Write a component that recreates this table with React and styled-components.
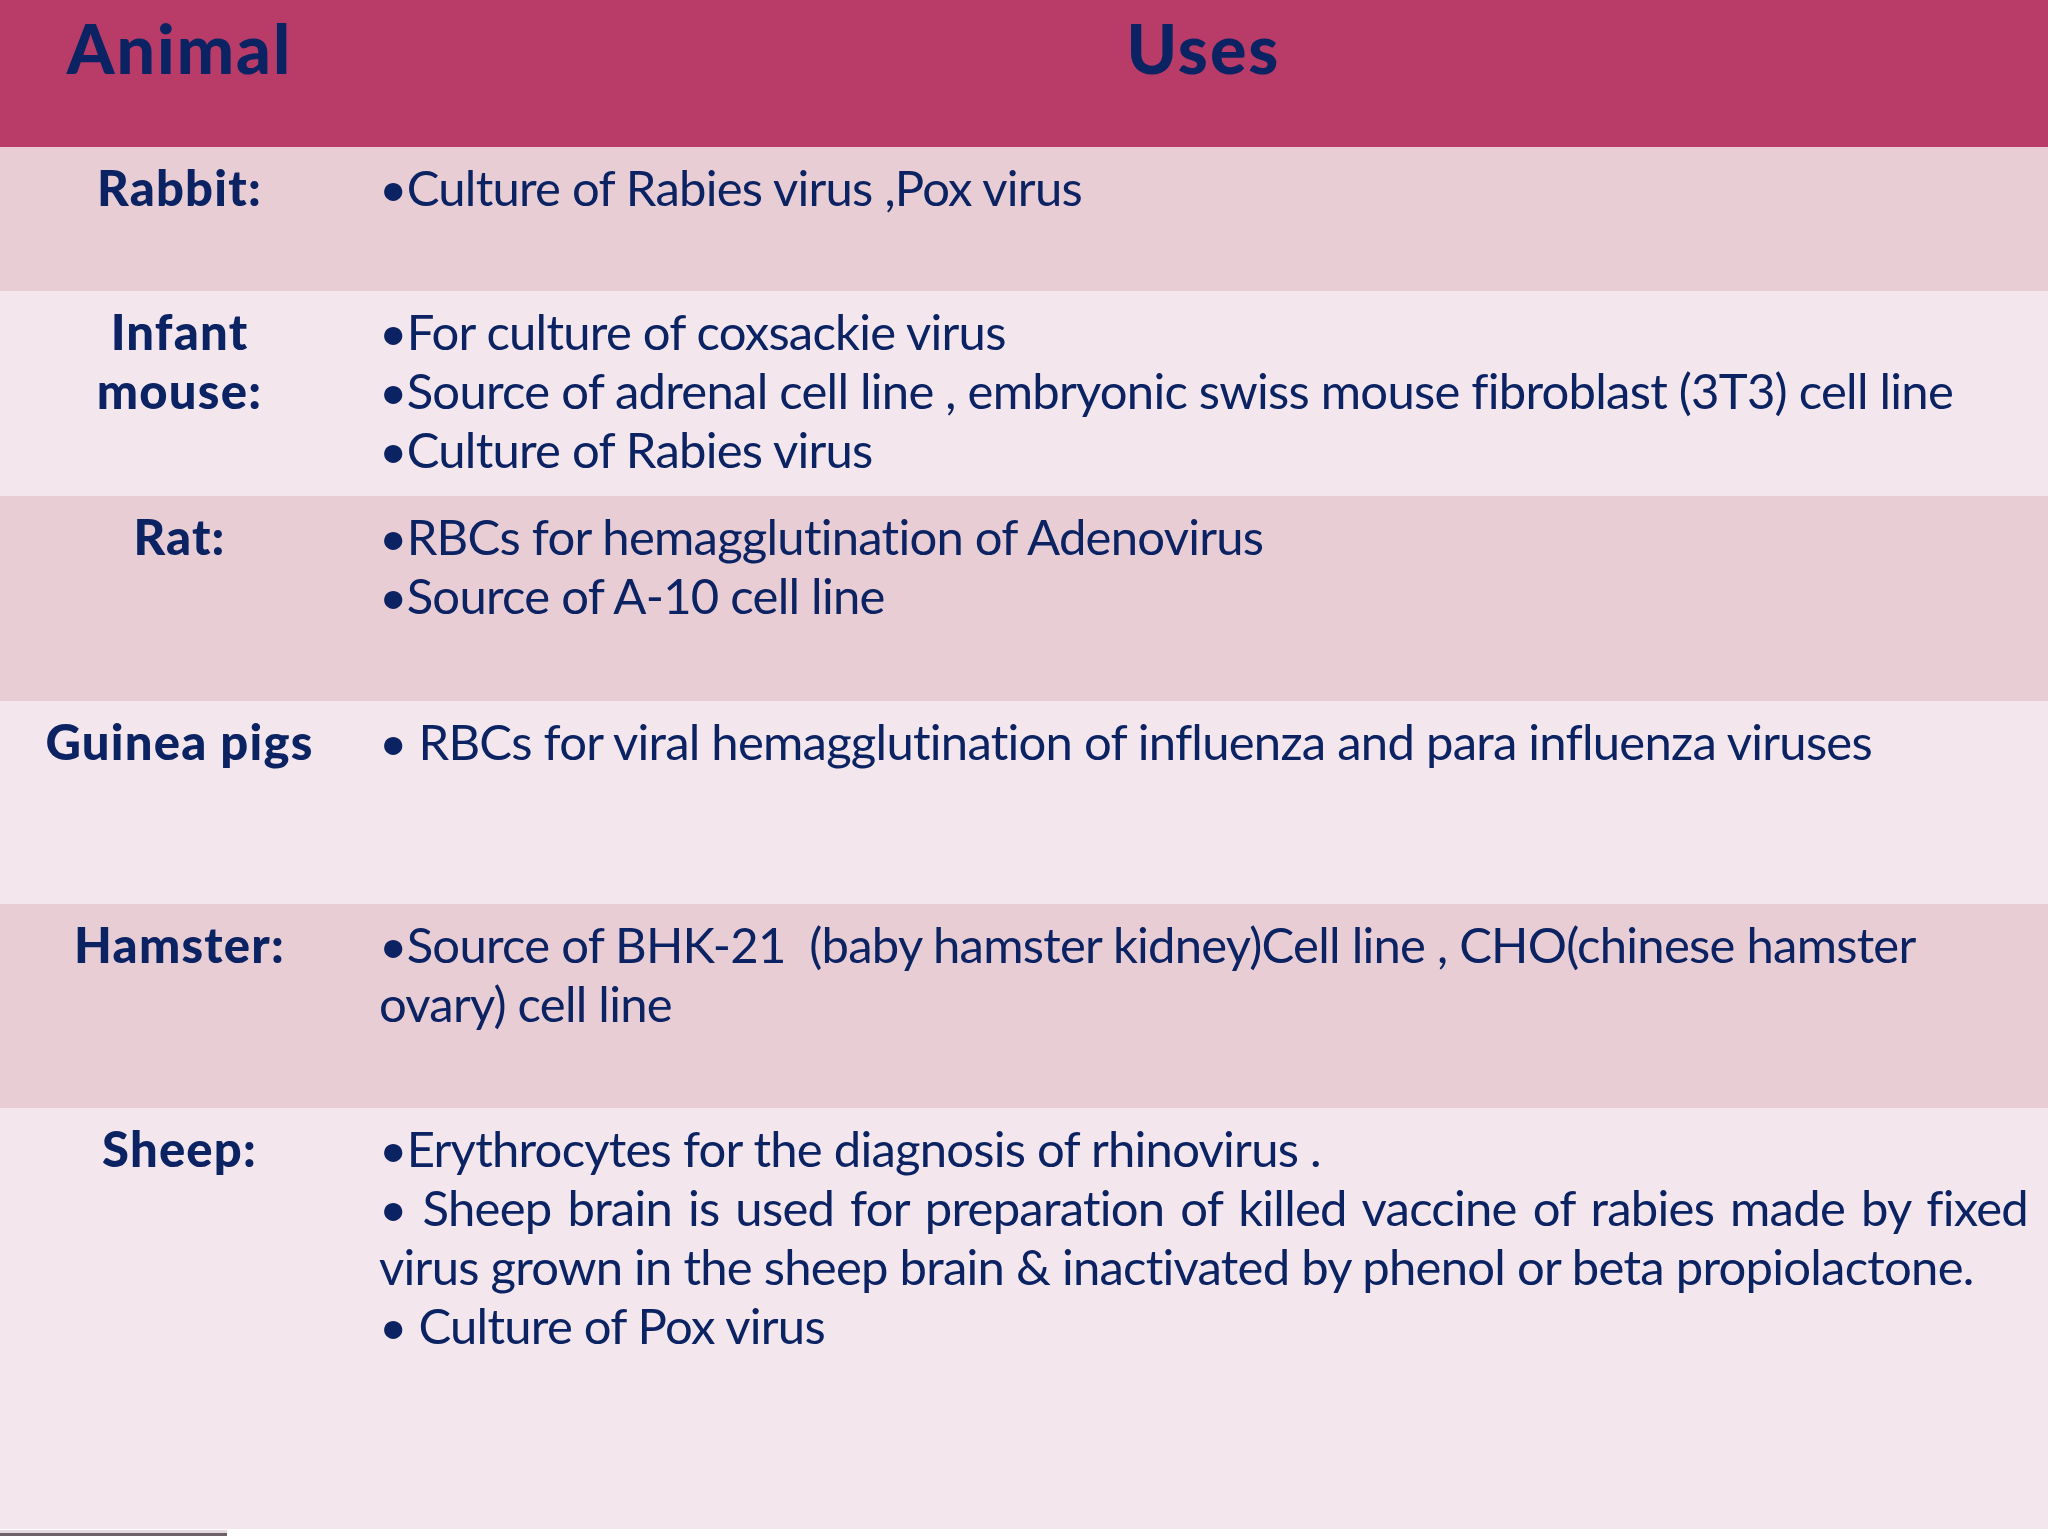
import React from 'react';
import styled, { createGlobalStyle } from 'styled-components';

const GlobalStyle = createGlobalStyle`
  html, body { margin: 0; padding: 0; background: #ffffff; }
  body { font-family: Lato, "Open Sans", sans-serif; }
`;

const Slide = styled.div`
  width: 2048px;
  height: 1536px;
  display: flex;
  flex-direction: column;
  overflow: hidden;
  color: #0c2363;
`;

const Row = styled.div`
  display: grid;
  grid-template-columns: 359px 1fr;
  height: ${p => p.h}px;
  flex: none;
  background: ${p => p.bg};
`;

const HeadCell = styled.div`
  padding: 8px 20px 0;
  font-size: 68px;
  line-height: 80px;
  font-weight: 900;
  letter-spacing: 2px;
  text-align: center;
  color: #0c2363;
`;

const Label = styled.div`
  padding: 11px 20px 0;
  font-size: 49px;
  line-height: 59px;
  font-weight: 900;
  letter-spacing: 1.2px;
  text-align: center;
`;

const Uses = styled.div`
  padding: 11px 20px 0;
  font-size: 49px;
  line-height: 59px;
  letter-spacing: -0.75px;
`;

const Line = styled.div`
  text-align: ${p => (p.justify ? 'justify' : 'left')};
  text-align-last: ${p => (p.justify ? 'justify' : 'auto')};
  white-space: ${p => (p.justify ? 'normal' : 'pre')};
`;

const Footer = styled.div`
  flex: 1;
  display: flex;
  align-items: flex-end;
  background: #ffffff;
`;

const Progress = styled.div`
  width: 227px;
  height: 3px;
  background: #6e6266;
  border-top: 3px solid #e4d9de;
`;

const DARK = '#e8cdd5';
const LIGHT = '#f3e6ec';

const rows = [
  { animal: ['Rabbit:'], h: 144, bg: DARK, lines: ['•Culture of Rabies virus ,Pox virus'] },
  {
    animal: ['Infant', 'mouse:'], h: 205, bg: LIGHT,
    lines: [
      '•For culture of coxsackie virus',
      '•Source of adrenal cell line , embryonic swiss mouse fibroblast (3T3) cell line',
      '•Culture of Rabies virus',
    ],
  },
  {
    animal: ['Rat:'], h: 205, bg: DARK,
    lines: ['•RBCs for hemagglutination of Adenovirus', '•Source of A-10 cell line'],
  },
  {
    animal: ['Guinea pigs'], h: 203, bg: LIGHT,
    lines: ['• RBCs for viral hemagglutination of influenza and para influenza viruses'],
  },
  {
    animal: ['Hamster:'], h: 204, bg: DARK,
    lines: ['•Source of BHK-21  (baby hamster kidney)Cell line , CHO(chinese hamster', 'ovary) cell line'],
  },
  {
    animal: ['Sheep:'], h: 421, bg: LIGHT,
    lines: [
      '•Erythrocytes for the diagnosis of rhinovirus .',
      { text: '• Sheep brain is used for preparation of killed vaccine of rabies made by fixed', justify: true },
      'virus grown in the sheep brain & inactivated by phenol or beta propiolactone.',
      '• Culture of Pox virus',
    ],
  },
];

export default function App() {
  return (
    <>
      <GlobalStyle />
      <Slide>
        <Row h={147} bg="#b83c67">
          <HeadCell>Animal</HeadCell>
          <HeadCell>Uses</HeadCell>
        </Row>
        {rows.map(r => (
          <Row key={r.animal.join(' ')} h={r.h} bg={r.bg}>
            <Label>
              {r.animal.map(a => <div key={a}>{a}</div>)}
            </Label>
            <Uses>
              {r.lines.map((l, i) =>
                typeof l === 'string'
                  ? <Line key={i}>{l}</Line>
                  : <Line key={i} justify>{l.text}</Line>
              )}
            </Uses>
          </Row>
        ))}
        <Footer>
          <Progress />
        </Footer>
      </Slide>
    </>
  );
}
